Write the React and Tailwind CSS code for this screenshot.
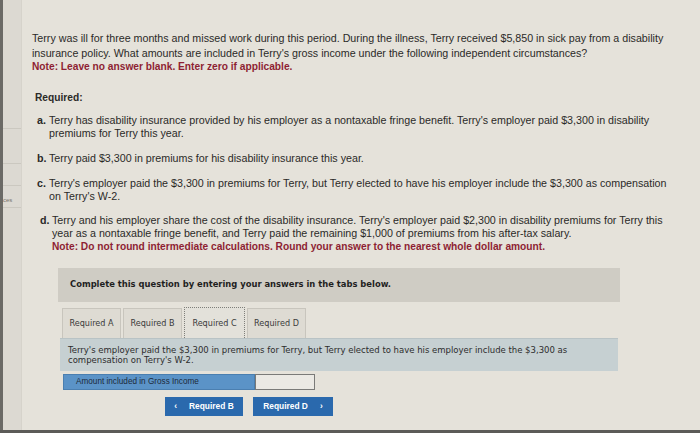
import React from "react";

const bodyFont = { fontFamily: '"Liberation Sans", Arial, sans-serif' };
const verdana = { fontFamily: '"DejaVu Sans", Verdana, sans-serif' };

const Item = ({ letter, lines, note }) => (
  <div className="flex text-[10.7px] leading-[13px] text-[#2b2a28]">
    <span className="w-[12px] shrink-0 font-bold">{letter}.</span>
    <div>
      {lines.map((l, i) => (
        <div key={i} className="whitespace-nowrap">{l}</div>
      ))}
      {note && <div className="whitespace-nowrap font-bold text-[10.2px] text-[#8e1f33]">{note}</div>}
    </div>
  </div>
);

const Tab = ({ label, active }) => (
  <div
    className={
      active
        ? "w-[61px] h-[31px] flex items-center justify-center bg-[#e3e1da] border border-dotted border-[#7f7f7a] border-b-0 text-[8.1px] text-[#3a3a3a]"
        : "w-[59px] h-[30px] flex items-center justify-center bg-[#dedbd3] border border-[#c8c5bd] border-b-0 text-[8.1px] text-[#3a3a3a]"
    }
    style={verdana}
  >
    {label}
  </div>
);

export default function App() {
  return (
    <div className="w-[700px] h-[433px] bg-[#e5e2da] flex flex-col overflow-hidden" style={bodyFont}>
      <div className="flex flex-1">
        {/* left sidebar edge */}
        <div className="w-[22px] shrink-0 flex border-r border-[#d6d3cb]">
          <div className="w-[3px] bg-[#6b6a66]" />
          <div className="flex-1 bg-[#dcd9d2] flex flex-col pt-[128px]">
            <div className="h-[36px] border-y border-[#cbc8c0]" />
            <div className="h-[22px] border-b border-[#cbc8c0]" />
            <div className="h-[22px] border-b border-[#cbc8c0] flex items-end pb-[2px] text-[6px] text-[#77756f]">ces</div>
          </div>
        </div>

        {/* main content */}
        <div className="flex-1 pl-[10px] pt-[31px]">
          <div className="text-[10.7px] leading-[14.5px] text-[#2b2a28]">
            <div className="whitespace-nowrap">
              Terry was ill for three months and missed work during this period. During the illness, Terry received $5,850 in sick pay from a disability
            </div>
            <div className="whitespace-nowrap">
              insurance policy. What amounts are included in Terry's gross income under the following independent circumstances?
            </div>
            <div className="whitespace-nowrap font-bold text-[10.2px] text-[#8e1f33]">
              Note: Leave no answer blank. Enter zero if applicable.
            </div>
          </div>

          <div className="mt-[15px] pl-[3px] text-[10.2px] font-bold text-[#2b2a28]">Required:</div>

          <div className="pl-[5px] mt-[9px] flex flex-col gap-[12px]">
            <Item
              letter="a"
              lines={[
                "Terry has disability insurance provided by his employer as a nontaxable fringe benefit. Terry's employer paid $3,300 in disability",
                "premiums for Terry this year.",
              ]}
            />
            <Item letter="b" lines={["Terry paid $3,300 in premiums for his disability insurance this year."]} />
            <Item
              letter="c"
              lines={[
                "Terry's employer paid the $3,300 in premiums for Terry, but Terry elected to have his employer include the $3,300 as compensation",
                "on Terry's W-2.",
              ]}
            />
            <div className="pl-[3px] -mt-[1px]">
              <Item
                letter="d"
                lines={[
                  "Terry and his employer share the cost of the disability insurance. Terry's employer paid $2,300 in disability premiums for Terry this",
                  "year as a nontaxable fringe benefit, and Terry paid the remaining $1,000 of premiums from his after-tax salary.",
                ]}
                note="Note: Do not round intermediate calculations. Round your answer to the nearest whole dollar amount."
              />
            </div>
          </div>

          {/* question block */}
          <div className="ml-[26px] mt-[15px] w-[562px]">
            <div
              className="h-[34px] bg-[#cfccc4] flex items-center pl-[12px] text-[8.4px] font-bold text-[#1f1f1f]"
              style={verdana}
            >
              Complete this question by entering your answers in the tabs below.
            </div>

            <div className="flex items-end gap-[2px] pl-[4px] mt-[5px]">
              <Tab label="Required A" />
              <Tab label="Required B" />
              <Tab label="Required C" active />
              <Tab label="Required D" />
            </div>

            <div
              className="ml-[2px] w-[558px] h-[33px] bg-[#c6d0d2] border-t border-[#b9c3c5] px-[8px] pt-[6px] text-[8.5px] leading-[10.5px] text-[#2d2d2d]"
              style={verdana}
            >
              <div className="whitespace-nowrap">
                Terry's employer paid the $3,300 in premiums for Terry, but Terry elected to have his employer include the $3,300 as
              </div>
              <div className="whitespace-nowrap">compensation on Terry's W-2.</div>
            </div>

            <div className="flex ml-[5px] mt-[3px] h-[16px]">
              <div className="w-[192px] bg-[#5b93c7] border border-[#4b7fb0] flex items-center pl-[12px] text-[8.2px] text-[#1d2a3a]">
                Amount included in Gross Income
              </div>
              <div className="w-[60px] bg-[#ebe9e4] border border-[#7a7a78]" />
            </div>

            <div className="flex gap-[10px] ml-[107px] mt-[7px]">
              <div className="w-[78px] h-[19px] bg-[#2a69ad] flex items-center justify-center gap-[12px] text-[8.4px] font-bold text-white">
                <span>&lsaquo;</span>
                <span>Required B</span>
              </div>
              <div className="w-[80px] h-[19px] bg-[#2a69ad] flex items-center justify-center gap-[12px] text-[8.4px] font-bold text-white">
                <span>Required D</span>
                <span>&rsaquo;</span>
              </div>
            </div>
          </div>
        </div>
      </div>
      <div className="h-[3px] bg-[#5c5b58]" />
    </div>
  );
}
